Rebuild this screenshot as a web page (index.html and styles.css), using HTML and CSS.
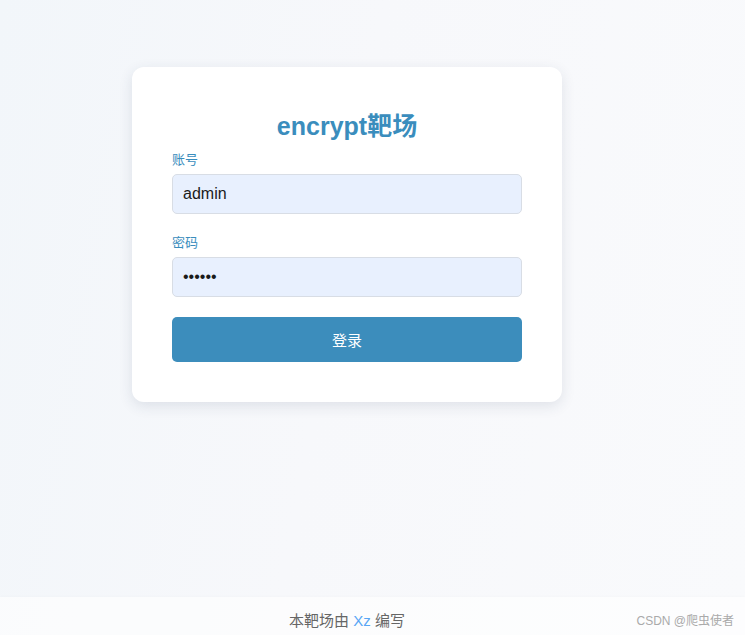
FILE: index.html
```html
<!DOCTYPE html>
<html lang="zh-CN">
<head>
    <meta charset="UTF-8">
    <meta name="viewport" content="width=device-width, initial-scale=1.0">
    <title>encrypt靶场</title>
    <link rel="stylesheet" href="styles.css">
</head>
<body>
    <div class="page">
        <div class="stage">
            <form class="login-card" onsubmit="return false;">
                <h2 class="title">encrypt靶场</h2>
                <div class="field">
                    <label for="username">账号</label>
                    <input type="text" id="username" value="admin">
                </div>
                <div class="field">
                    <label for="password">密码</label>
                    <input type="password" id="password" value="123456">
                </div>
                <button type="submit" class="btn-login">登录</button>
            </form>
        </div>
        <footer class="footer">
            <p>本靶场由 <span class="author">Xz</span> 编写</p>
        </footer>
    </div>
    <div class="watermark">CSDN @爬虫使者</div>
</body>
</html>
```

FILE: styles.css
```css
html, body {
    height: 100%;
}
body {
    margin: 0;
    padding: 0;
    font-family: "Liberation Sans", Arial, "Noto Sans CJK SC", sans-serif;
    background: linear-gradient(100deg, #f2f6fa 0%, #f7f8fb 45%, #f9fafc 100%);
    color: #333;
    overflow: hidden;
}
.page {
    width: 694px;
    height: 100%;
    display: flex;
    flex-direction: column;
}
.stage {
    flex: 1;
    display: flex;
    justify-content: center;
    align-items: flex-start;
    padding-top: 67px;
}
.login-card {
    width: 430px;
    box-sizing: border-box;
    padding: 40px;
    background: #fff;
    border-radius: 12px;
    box-shadow: 0 4px 14px rgba(40, 60, 90, 0.12);
}
.title {
    margin: 1px 0 7px;
    text-align: center;
    font-size: 25px;
    line-height: 36px;
    font-weight: bold;
    color: #3a8dbd;
}
.field {
    margin-bottom: 20px;
}
.field label {
    display: block;
    font-size: 13px;
    line-height: 18px;
    color: #3a8dbd;
    margin-bottom: 5px;
}
.field input {
    display: block;
    width: 100%;
    height: 40px;
    box-sizing: border-box;
    padding: 0 10px;
    border: 1px solid #d8dde5;
    border-radius: 5px;
    background: #e8f0fe;
    font-family: "Liberation Sans", Arial, sans-serif;
    font-size: 16px;
    color: #1a1a1a;
    outline: none;
}
.btn-login {
    display: block;
    width: 100%;
    height: 45px;
    border: none;
    border-radius: 5px;
    background: #3c8dbc;
    color: #fff;
    font-family: "Liberation Sans", "Noto Sans CJK SC", sans-serif;
    font-size: 15px;
    cursor: pointer;
}
.footer {
    width: 745px;
    height: 38px;
    background: rgba(255, 255, 255, 0.6);
    box-shadow: 0 -1px 2px rgba(0, 0, 0, 0.015);
}
.footer p {
    width: 694px;
    margin: 0;
    text-align: center;
    line-height: 48px;
    font-size: 15px;
    color: #666;
}
.author {
    color: #58a6f5;
}
.watermark {
    position: absolute;
    right: 11px;
    bottom: 4px;
    font-size: 12px;
    line-height: 20px;
    color: #aaa;
}
```
